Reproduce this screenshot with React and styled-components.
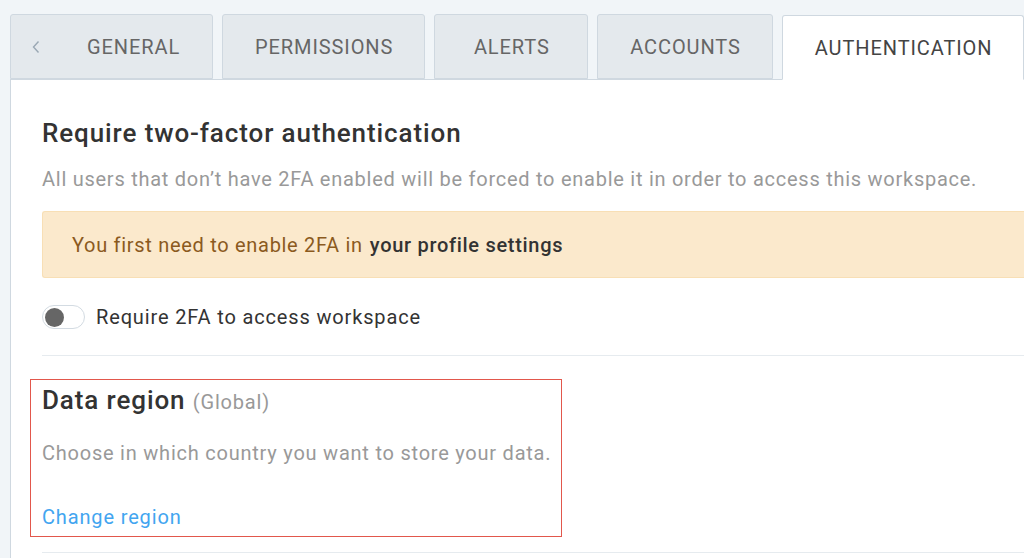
import React from "react";
import styled, { createGlobalStyle } from "styled-components";

const Global = createGlobalStyle`
  html, body { margin: 0; padding: 0; background: #f1f5f8; }
  body { font-family: Roboto, "Liberation Sans", Arial, sans-serif; overflow: hidden; }
  * { box-sizing: border-box; }
`;

const Page = styled.div`
  width: 1024px;
  height: 558px;
  padding: 14px 0 0 10px;
  overflow: hidden;
`;

const TabStrip = styled.div`
  display: flex;
  align-items: flex-end;
  gap: 9px;
  height: 65px;
  white-space: nowrap;
  position: relative;
  z-index: 1;
`;

const Tab = styled.div`
  flex: none;
  height: 65px;
  min-width: ${(p) => p.$minWidth || 0}px;
  padding: ${(p) => (p.$first ? "0 32px 0 20px" : "0 31px 0 32px")};
  display: flex;
  align-items: center;
  justify-content: center;
  background: ${(p) => (p.$active ? "#ffffff" : "#e4e9ed")};
  border: 1px solid #cfd8e0;
  border-bottom-color: ${(p) => (p.$active ? "#ffffff" : "#cfd8e0")};
  border-radius: 3px 3px 0 0;
  color: ${(p) => (p.$active ? "#444" : "#666")};
  font-size: 20px;
  letter-spacing: 0.9px;
  text-transform: uppercase;
  ${(p) => p.$active && "margin: 1px 0 -1px;"}
`;

const Chevron = styled.svg`
  width: 10px;
  height: 14px;
  margin-right: 46px;
  flex: none;
`;

const Panel = styled.div`
  background: #ffffff;
  border-left: 1px solid #cfd8e0;
  border-top: 1px solid #cfd8e0;
  height: 500px;
  padding: 0 0 0 31px;
`;

const Section = styled.section`
  padding: 37px 0 0;
`;

const Title = styled.h2`
  margin: 0;
  font-size: 26px;
  line-height: 32px;
  font-weight: 500;
  letter-spacing: 0.9px;
  color: #333;
`;

const Muted = styled.span`
  font-size: 20px;
  font-weight: 400;
  letter-spacing: 0.8px;
  color: #999;
`;

const Subtitle = styled.p`
  margin: 18px 0 0;
  font-size: 20px;
  line-height: 24px;
  letter-spacing: 0.74px;
  color: #999;
  white-space: nowrap;
`;

const Alert = styled.div`
  margin-top: 20px;
  height: 67px;
  display: flex;
  align-items: center;
  padding: 0 29px;
  background: #fbe9cc;
  border: 1px solid #f8dfb5;
  border-right: none;
  border-radius: 3px 0 0 3px;
  font-size: 20px;
  letter-spacing: 0.7px;
  color: #8b5a1e;
  white-space: nowrap;
`;

const Strong = styled.span`
  color: #333;
  font-weight: 500;
  margin-left: 7px;
`;

const ToggleRow = styled.label`
  display: flex;
  align-items: center;
  gap: 11px;
  margin-top: 27px;
  font-size: 20px;
  letter-spacing: 0.85px;
  color: #333;
  white-space: nowrap;
`;

const Track = styled.span`
  width: 43px;
  height: 24px;
  border-radius: 12px;
  border: 1.5px solid #d3dbe2;
  background: #fff;
  display: flex;
  align-items: center;
  padding-left: 2px;
  flex: none;
`;

const Knob = styled.span`
  width: 19px;
  height: 19px;
  border-radius: 50%;
  background: #666;
`;

const Divider = styled.hr`
  margin: ${(p) => p.$top || 0}px 0 0;
  border: none;
  border-top: 1.5px solid #e6ebef;
`;

const Highlight = styled.div`
  margin: 23px 0 0 -12px;
  width: 532px;
  height: 158px;
  border: 1.5px solid #e2574c;
  padding: 4px 0 0 11px;
`;

const Desc = styled.p`
  margin: 23px 0 0;
  font-size: 20px;
  line-height: 24px;
  letter-spacing: 0.77px;
  color: #999;
  white-space: nowrap;
`;

const Link = styled.a`
  display: block;
  margin-top: 40px;
  font-size: 20px;
  line-height: 24px;
  letter-spacing: 0.85px;
  color: #42a5f0;
  text-decoration: none;
`;

const tabs = [
  { label: "General" },
  { label: "Permissions" },
  { label: "Alerts", minWidth: 154 },
  { label: "Accounts" },
  { label: "Authentication", active: true },
];

export default function App() {
  return (
    <>
      <Global />
      <Page>
        <TabStrip>
          {tabs.map((t, i) => (
            <Tab key={t.label} $first={i === 0} $active={t.active} $minWidth={t.minWidth}>
              {i === 0 && (
                <Chevron viewBox="0 0 10 14">
                  <path d="M7.5 1.5 L2.5 7 L7.5 12.5" fill="none" stroke="#9aa8b4" strokeWidth="1.4" />
                </Chevron>
              )}
              {t.label}
            </Tab>
          ))}
        </TabStrip>
        <Panel>
          <Section>
            <Title>Require two-factor authentication</Title>
            <Subtitle>
              All users that don’t have 2FA enabled will be forced to enable it in order to access this workspace.
            </Subtitle>
            <Alert>
              You first need to enable 2FA in<Strong>your profile settings</Strong>
            </Alert>
            <ToggleRow>
              <Track>
                <Knob />
              </Track>
              Require 2FA to access workspace
            </ToggleRow>
            <Divider $top={26} />
            <Highlight>
              <Title>
                Data region <Muted>(Global)</Muted>
              </Title>
              <Desc>Choose in which country you want to store your data.</Desc>
              <Link href="#">Change region</Link>
            </Highlight>
            <Divider $top={15} />
          </Section>
        </Panel>
      </Page>
    </>
  );
}
